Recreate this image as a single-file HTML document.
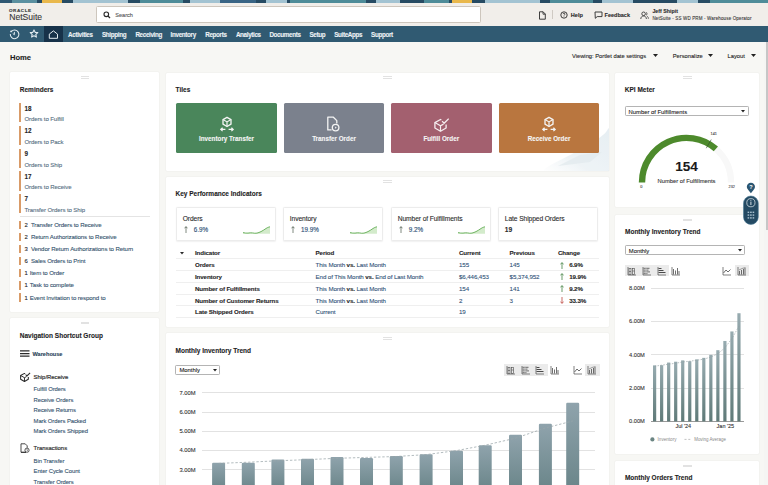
<!DOCTYPE html>
<html><head><meta charset="utf-8">
<style>
*{box-sizing:border-box;margin:0;padding:0}
html,body{width:768px;height:485px;overflow:hidden}
body{position:relative;background:#f7f7f4;font-family:"Liberation Sans",sans-serif;color:#1f1f1f;-webkit-text-stroke-width:0.1px}
.a{position:absolute;white-space:nowrap}
.strip{position:absolute;left:0;top:0;width:768px;height:3px;background:linear-gradient(90deg,#2f5873 0 12px,#5b90a0 12px 37px,#274b63 37px 42px,#e9b84c 42px 62px,#274b63 62px 73px,#a3c3d2 73px 128px,#274b63 128px 140px,#4f8c99 140px 183px,#274b63 183px 190px,#a3c3d2 190px 220px,#3a6585 220px 256px,#274b63 256px 266px,#a3c3d2 266px 287px,#274b63 287px 290px,#4f8c99 290px 366px,#274b63 366px 376px,#a3c3d2 376px 400px,#274b63 400px 424px,#4f8c99 424px 449px,#274b63 449px 452px,#e9b84c 452px 472px,#274b63 472px 485px,#a3c3d2 485px 540px,#274b63 540px 550px,#4f8c99 550px 593px,#274b63 593px 602px,#a3c3d2 602px 633px,#274b63 633px 677px,#a3c3d2 677px 698px,#274b63 698px 710px,#4f8c99 710px 768px)}
.hdr{position:absolute;left:0;top:3px;width:768px;height:22.5px;background:#f1eeea}
.nav{position:absolute;left:0;top:25.5px;width:768px;height:16px;background:#305a72}
.nav .t{position:absolute;top:1.2px;line-height:16px;color:#eef3f6;font-weight:bold;font-size:6.3px;letter-spacing:-0.35px}
.card{position:absolute;background:#fff;border-radius:1px;box-shadow:0 0 1.2px rgba(0,0,0,.13)}
.grip{position:absolute;width:8.5px;height:2.6px;border-top:0.6px solid #e2e2e2;border-bottom:0.6px solid #e2e2e2}
.ttl{position:absolute;font-weight:bold;font-size:6.5px;color:#1d1d1d;white-space:nowrap}
</style></head><body>
<div class="strip"></div>
<div class="hdr"></div>

<div class="a" style="left:9.4px;top:8.9px;font-size:3.6px;font-weight:bold;letter-spacing:0.45px;color:#3b3b3b;line-height:4px;transform:scaleX(1.27);transform-origin:0 0">ORACLE</div>
<div class="a" style="left:9.2px;top:11.9px;font-size:8.6px;color:#353535;line-height:10px">NetSuite</div>
<div class="a" style="left:95.5px;top:6.4px;width:385px;height:16.2px;background:#fff;border:0.7px solid #cdc6bd;border-radius:1.5px"></div>
<svg class="a" style="left:102.5px;top:11px" width="8" height="8" viewBox="0 0 8 8"><circle cx="3.3" cy="3.3" r="2.3" fill="none" stroke="#2a2a2a" stroke-width="1.1"/><line x1="5" y1="5" x2="7" y2="7" stroke="#2a2a2a" stroke-width="1.2"/></svg>
<div class="a" style="left:115.2px;top:10.5px;font-size:5.6px;color:#555;line-height:8px">Search</div>
<svg class="a" style="left:537.5px;top:11px" width="9" height="9" viewBox="0 0 9 9"><path d="M1.5 0.8h3.6l2.2 2.2v5.2h-5.8z" fill="none" stroke="#2a2a2a" stroke-width="0.9"/><path d="M5 0.8v2.4h2.3" fill="none" stroke="#2a2a2a" stroke-width="0.8"/></svg>
<div class="a" style="left:552px;top:10px;width:0.6px;height:9px;background:#cfcac3"></div>
<svg class="a" style="left:559.5px;top:11px" width="8" height="8" viewBox="0 0 8 8"><circle cx="4" cy="4" r="3.2" fill="none" stroke="#2a2a2a" stroke-width="0.9"/><path d="M3 3.1c0-1.2 2-1.2 2 0c0 .8-1 .7-1 1.5" fill="none" stroke="#2a2a2a" stroke-width="0.8"/><circle cx="4" cy="5.7" r=".45" fill="#2a2a2a"/></svg>
<div class="a" style="left:570.8px;top:11px;font-size:5.6px;font-weight:bold;color:#2a2a2a;line-height:8px">Help</div>
<svg class="a" style="left:593.5px;top:11px" width="9" height="8" viewBox="0 0 9 8"><path d="M1 1h7v4.6H3.2L1.3 7.3z" fill="none" stroke="#2a2a2a" stroke-width="0.9"/></svg>
<div class="a" style="left:604.6px;top:11px;font-size:5.5px;font-weight:bold;color:#2a2a2a;line-height:8px">Feedback</div>
<svg class="a" style="left:640px;top:11px" width="9" height="9" viewBox="0 0 9 9"><circle cx="3.6" cy="2.8" r="1.8" fill="none" stroke="#2a2a2a" stroke-width="0.8"/><path d="M0.8 8c0-2 1.3-3 2.8-3s2.8 1 2.8 3" fill="none" stroke="#2a2a2a" stroke-width="0.8"/><path d="M6 1.3a1.6 1.6 0 0 1 0 3M7.2 5.2c.8.5 1.2 1.4 1.2 2.6" fill="none" stroke="#2a2a2a" stroke-width="0.7"/></svg>
<div class="a" style="left:652.4px;top:8.3px;font-size:5.3px;font-weight:bold;color:#2a2a2a;line-height:7px">Jeff Shipit</div>
<div class="a" style="left:652.4px;top:15.6px;font-size:4.5px;color:#3a3a3a;line-height:6px;letter-spacing:0.15px">NetSuite - SS WD PRM - Warehouse Operator</div>

<div class="nav">
<svg class="a" style="left:9px;top:3.5px" width="11" height="11" viewBox="0 0 11 11"><path d="M2.3 2.6A4.3 4.3 0 1 1 1.3 5" fill="none" stroke="#e3ecf1" stroke-width="1.05"/><circle cx="2.1" cy="2.4" r=".95" fill="#e3ecf1"/><path d="M5.4 2.9v2.8L3.8 4.6" fill="none" stroke="#e3ecf1" stroke-width="0.95"/></svg>
<svg class="a" style="left:29px;top:3.8px" width="10" height="9" viewBox="0 0 10 9"><path d="M5 .9l1.15 2.45 2.65.3-1.95 1.8.55 2.65L5 6.75 2.6 8.1l.55-2.65L1.2 3.65l2.65-.3z" fill="none" stroke="#e3ecf1" stroke-width="1.1" stroke-linejoin="round"/></svg>
<div class="a" style="left:44.2px;top:0;width:18.8px;height:16px;background:#17324a"></div>
<svg class="a" style="left:48px;top:4.3px" width="11" height="9" viewBox="0 0 11 9"><path d="M1.3 8.3V4.1L5.4 .9l4.1 3.2v4.2z" fill="none" stroke="#e3ecf1" stroke-width="1" stroke-linejoin="round"/></svg>
<div class="t" style="left:68.1px">Activities</div>
<div class="t" style="left:102px">Shipping</div>
<div class="t" style="left:135.4px">Receiving</div>
<div class="t" style="left:170.6px">Inventory</div>
<div class="t" style="left:205.2px">Reports</div>
<div class="t" style="left:235.9px">Analytics</div>
<div class="t" style="left:269.4px">Documents</div>
<div class="t" style="left:309.5px">Setup</div>
<div class="t" style="left:334.2px">SuiteApps</div>
<div class="t" style="left:371.1px">Support</div>
</div>

<div class="a" style="left:10px;top:52.5px;font-size:7.6px;font-weight:bold;color:#1d1d1d;line-height:10px">Home</div>
<div class="a" style="left:572px;top:52.6px;font-size:5.75px;color:#222;line-height:7px">Viewing: Portlet date settings</div>
<svg class="a" style="left:653px;top:54px" width="5" height="3" viewBox="0 0 5 3"><path d="M0 0h5L2.5 3z" fill="#222"/></svg>
<div class="a" style="left:672.7px;top:52.6px;font-size:5.75px;color:#222;line-height:7px">Personalize</div>
<svg class="a" style="left:707.5px;top:54px" width="5" height="3" viewBox="0 0 5 3"><path d="M0 0h5L2.5 3z" fill="#222"/></svg>
<div class="a" style="left:727.6px;top:52.6px;font-size:5.75px;color:#222;line-height:7px">Layout</div>
<svg class="a" style="left:751px;top:54px" width="5" height="3" viewBox="0 0 5 3"><path d="M0 0h5L2.5 3z" fill="#222"/></svg>

<div class="card" style="left:10px;top:72.2px;width:149.3px;height:239.5px"></div>
<div class="grip" style="left:80.5px;top:76.3px"></div>
<div class="ttl" style="left:19.8px;top:85.5px;line-height:8px">Reminders</div>
<div class="a" style="left:19.2px;top:103.2px;width:1.5px;height:19.3px;background:#d99b68"></div>
<div class="a" style="left:24.4px;top:104.6px;font-size:6.3px;font-weight:bold;color:#262626;line-height:8px">18</div>
<div class="a" style="left:24.4px;top:115.1px;font-size:6.05px;letter-spacing:-0.1px;color:#566f83;line-height:8px">Orders to Fulfill</div>
<div class="a" style="left:19.2px;top:125.9px;width:1.5px;height:19.3px;background:#d99b68"></div>
<div class="a" style="left:24.4px;top:127.3px;font-size:6.3px;font-weight:bold;color:#262626;line-height:8px">12</div>
<div class="a" style="left:24.4px;top:137.8px;font-size:6.05px;letter-spacing:-0.1px;color:#566f83;line-height:8px">Orders to Pack</div>
<div class="a" style="left:19.2px;top:148.6px;width:1.5px;height:19.3px;background:#d99b68"></div>
<div class="a" style="left:24.4px;top:150.0px;font-size:6.3px;font-weight:bold;color:#262626;line-height:8px">9</div>
<div class="a" style="left:24.4px;top:160.5px;font-size:6.05px;letter-spacing:-0.1px;color:#566f83;line-height:8px">Orders to Ship</div>
<div class="a" style="left:19.2px;top:171.3px;width:1.5px;height:19.3px;background:#d99b68"></div>
<div class="a" style="left:24.4px;top:172.7px;font-size:6.3px;font-weight:bold;color:#262626;line-height:8px">17</div>
<div class="a" style="left:24.4px;top:183.2px;font-size:6.05px;letter-spacing:-0.1px;color:#566f83;line-height:8px">Orders to Receive</div>
<div class="a" style="left:19.2px;top:194.0px;width:1.5px;height:19.3px;background:#d99b68"></div>
<div class="a" style="left:24.4px;top:195.4px;font-size:6.3px;font-weight:bold;color:#262626;line-height:8px">7</div>
<div class="a" style="left:24.4px;top:205.9px;font-size:6.05px;letter-spacing:-0.1px;color:#566f83;line-height:8px">Transfer Orders to Ship</div>
<div class="a" style="left:19.6px;top:216.3px;width:130.5px;height:0.6px;background:#e4e4e4"></div>
<div class="a" style="left:19.2px;top:220.5px;width:1.5px;height:8.4px;background:#d99b68"></div>
<div class="a" style="left:24.4px;top:220.7px;font-size:5.9px;color:#2b2b2b;-webkit-text-stroke:0.12px #2b2b2b;line-height:8px">2</div>
<div class="a" style="left:30.9px;top:220.7px;font-size:6.1px;letter-spacing:-0.1px;color:#34536e;line-height:8px">Transfer Orders to Receive</div>
<div class="a" style="left:19.2px;top:232.6px;width:1.5px;height:8.4px;background:#d99b68"></div>
<div class="a" style="left:24.4px;top:232.8px;font-size:5.9px;color:#2b2b2b;-webkit-text-stroke:0.12px #2b2b2b;line-height:8px">2</div>
<div class="a" style="left:30.9px;top:232.8px;font-size:6.1px;letter-spacing:-0.1px;color:#34536e;line-height:8px">Return Authorizations to Receive</div>
<div class="a" style="left:19.2px;top:244.8px;width:1.5px;height:8.4px;background:#d99b68"></div>
<div class="a" style="left:24.4px;top:245.0px;font-size:5.9px;color:#2b2b2b;-webkit-text-stroke:0.12px #2b2b2b;line-height:8px">3</div>
<div class="a" style="left:30.9px;top:245.0px;font-size:6.1px;letter-spacing:-0.1px;color:#34536e;line-height:8px">Vendor Return Authorizations to Return</div>
<div class="a" style="left:19.2px;top:256.9px;width:1.5px;height:8.4px;background:#d99b68"></div>
<div class="a" style="left:24.4px;top:257.1px;font-size:5.9px;color:#2b2b2b;-webkit-text-stroke:0.12px #2b2b2b;line-height:8px">6</div>
<div class="a" style="left:30.9px;top:257.1px;font-size:6.1px;letter-spacing:-0.1px;color:#34536e;line-height:8px">Sales Orders to Print</div>
<div class="a" style="left:19.2px;top:269.0px;width:1.5px;height:8.4px;background:#d99b68"></div>
<div class="a" style="left:24.4px;top:269.2px;font-size:5.9px;color:#2b2b2b;-webkit-text-stroke:0.12px #2b2b2b;line-height:8px">1</div>
<div class="a" style="left:29.7px;top:269.2px;font-size:6.1px;letter-spacing:-0.1px;color:#34536e;line-height:8px">Item to Order</div>
<div class="a" style="left:19.2px;top:281.2px;width:1.5px;height:8.4px;background:#d99b68"></div>
<div class="a" style="left:24.4px;top:281.4px;font-size:5.9px;color:#2b2b2b;-webkit-text-stroke:0.12px #2b2b2b;line-height:8px">1</div>
<div class="a" style="left:29.7px;top:281.4px;font-size:6.1px;letter-spacing:-0.1px;color:#34536e;line-height:8px">Task to complete</div>
<div class="a" style="left:19.2px;top:293.3px;width:1.5px;height:8.4px;background:#d99b68"></div>
<div class="a" style="left:24.4px;top:293.5px;font-size:5.9px;color:#2b2b2b;-webkit-text-stroke:0.12px #2b2b2b;line-height:8px">1</div>
<div class="a" style="left:29.7px;top:293.5px;font-size:6.1px;letter-spacing:-0.1px;color:#34536e;line-height:8px">Event Invitation to respond to</div>
<div class="card" style="left:10px;top:318px;width:149.3px;height:180px"></div>
<div class="grip" style="left:80.5px;top:321.5px"></div>
<div class="ttl" style="left:19.8px;top:332px;line-height:8px">Navigation Shortcut Group</div>
<svg class="a" style="left:19.6px;top:350.2px" width="10" height="7" viewBox="0 0 10 7"><path d="M0 .8h9.5M0 3.5h9.5M0 6.2h9.5" stroke="#2b2b2b" stroke-width="1.25"/></svg>
<div class="a" style="left:32.5px;top:349.8px;font-size:5.6px;font-weight:bold;color:#263f57;line-height:8px">Warehouse</div>
<svg class="a" style="left:19.5px;top:371px" width="11" height="11" viewBox="0 0 16 16"><path d="M12.1 8.6V12L6.5 15.2 0.9 12V6.6L6.5 3.5 7.4 4" fill="none" stroke="#2b2b2b" stroke-width="1.5" stroke-linejoin="round"/><path d="M0.9 6.6l5.6 3.1 3-1.6M6.5 9.7v5.5" fill="none" stroke="#2b2b2b" stroke-width="1.4"/><path d="M8.1 5.1l2 2.1 4.6-4.6" fill="none" stroke="#2b2b2b" stroke-width="1.5"/></svg>
<div class="a" style="left:33.6px;top:372.8px;font-size:5.9px;color:#333;-webkit-text-stroke:0.2px #333;line-height:8px">Ship/Receive</div>
<div class="a" style="left:33.6px;top:385.0px;font-size:5.9px;letter-spacing:-0.09px;color:#34536e;line-height:8px">Fulfill Orders</div>
<div class="a" style="left:33.6px;top:395.6px;font-size:5.9px;letter-spacing:-0.09px;color:#34536e;line-height:8px">Receive Orders</div>
<div class="a" style="left:33.6px;top:406.1px;font-size:5.9px;letter-spacing:-0.09px;color:#34536e;line-height:8px">Receive Returns</div>
<div class="a" style="left:33.6px;top:416.7px;font-size:5.9px;letter-spacing:-0.09px;color:#34536e;line-height:8px">Mark Orders Packed</div>
<div class="a" style="left:33.6px;top:427.3px;font-size:5.9px;letter-spacing:-0.09px;color:#34536e;line-height:8px">Mark Orders Shipped</div>
<svg class="a" style="left:19.8px;top:442.8px" width="10" height="10" viewBox="0 0 10 10"><path d="M1 .8h4.2l2 2v2M6 9.3H1z" fill="none" stroke="#2b2b2b" stroke-width="0.85"/><path d="M1 .8v8.5" stroke="#2b2b2b" stroke-width="0.85"/><circle cx="7" cy="7.2" r="2.1" fill="none" stroke="#2b2b2b" stroke-width="0.8"/><path d="M7 6.1v1.2l.8.5" fill="none" stroke="#2b2b2b" stroke-width="0.6"/></svg>
<div class="a" style="left:33.6px;top:443.9px;font-size:5.9px;color:#333;-webkit-text-stroke:0.2px #333;line-height:8px">Transactions</div>
<div class="a" style="left:33.6px;top:456.9px;font-size:5.9px;letter-spacing:-0.09px;color:#34536e;line-height:8px">Bin Transfer</div>
<div class="a" style="left:33.6px;top:467.4px;font-size:5.9px;letter-spacing:-0.09px;color:#34536e;line-height:8px">Enter Cycle Count</div>
<div class="a" style="left:33.6px;top:477.9px;font-size:5.9px;letter-spacing:-0.09px;color:#34536e;line-height:8px">Transfer Orders</div>
<div class="card" style="left:165.7px;top:72.6px;width:443.5px;height:98px"></div>
<div class="grip" style="left:383px;top:76.3px"></div>
<div class="ttl" style="left:175.6px;top:86.4px;line-height:8px">Tiles</div>
<svg class="a" style="left:540px;top:128px;opacity:.75" width="69" height="43" viewBox="0 0 69 43"><defs><linearGradient id="pg" x1="0" y1="1" x2="1" y2="0"><stop offset="0" stop-color="#eef3f6" stop-opacity="0"/><stop offset=".35" stop-color="#e9f0f4"/><stop offset="1" stop-color="#dfe9ef"/></linearGradient></defs><path d="M2 43C10 36 30 28 50 16S66 2 69 0V43z" fill="url(#pg)"/><path d="M18 38L40 27 62 24 50 34z" fill="#dae3e9" opacity=".8"/></svg>
<div class="a" style="left:176.25px;top:103.4px;width:100.5px;height:50px;background:#4a865b;border-radius:1.5px"></div>
<svg class="a" style="left:219.50px;top:116px" width="15" height="16" viewBox="0 0 15 16"><path d="M7 1.3L11 3.6v4.6L7 10.5 3 8.2V3.6z" fill="none" stroke="#f4f4f4" stroke-width="1.35" stroke-linejoin="round"/><path d="M3 3.6l4 2.3 4-2.3M7 5.9v4.6" fill="none" stroke="#f4f4f4" stroke-width="1.2"/><path d="M0.8 13.4h4.6M2.6 11.7L0.8 13.4l1.8 1.7M13.2 13.4H8.6M11.4 11.7L13.2 13.4l-1.8 1.7" fill="none" stroke="#f4f4f4" stroke-width="1.2"/></svg>
<div class="a" style="left:176.25px;top:135px;width:100.5px;text-align:center;font-size:6.3px;font-weight:bold;color:#f6f6f6;line-height:8px">Inventory Transfer</div>
<div class="a" style="left:283.75px;top:103.4px;width:100.5px;height:50px;background:#7b818d;border-radius:1.5px"></div>
<svg class="a" style="left:327.00px;top:116px" width="15" height="16" viewBox="0 0 15 16"><path d="M4.6 13.9H0.8V1.2h5.6l3.4 3.4v3" fill="none" stroke="#f4f4f4" stroke-width="1.3" stroke-linejoin="round"/><circle cx="8.6" cy="11.6" r="3.3" fill="none" stroke="#f4f4f4" stroke-width="1.3"/><path d="M8.1 10.5v2.2l1.6-1.1z" fill="#f4f4f4"/></svg>
<div class="a" style="left:283.75px;top:135px;width:100.5px;text-align:center;font-size:6.3px;font-weight:bold;color:#f6f6f6;line-height:8px">Transfer Order</div>
<div class="a" style="left:391px;top:103.4px;width:100.5px;height:50px;background:#a3606f;border-radius:1.5px"></div>
<svg class="a" style="left:434.25px;top:116px" width="15" height="16" viewBox="0 0 15 16"><path d="M12.1 8.6V12L6.5 15.2 0.9 12V6.6L6.5 3.5 7.4 4" fill="none" stroke="#f6eef0" stroke-width="1.3" stroke-linejoin="round"/><path d="M0.9 6.6l5.6 3.1 3-1.6M6.5 9.7v5.5" fill="none" stroke="#f6eef0" stroke-width="1.2"/><path d="M8.1 5.1l2 2.1 4.6-4.6" fill="none" stroke="#f6eef0" stroke-width="1.3"/></svg>
<div class="a" style="left:391px;top:135px;width:100.5px;text-align:center;font-size:6.3px;font-weight:bold;color:#f6f6f6;line-height:8px">Fulfill Order</div>
<div class="a" style="left:498.75px;top:103.4px;width:100.5px;height:50px;background:#b9763f;border-radius:1.5px"></div>
<svg class="a" style="left:542.00px;top:116px" width="15" height="16" viewBox="0 0 15 16"><path d="M7 1.3L11 3.6v4.6L7 10.5 3 8.2V3.6z" fill="none" stroke="#f4f4f4" stroke-width="1.35" stroke-linejoin="round"/><path d="M3 3.6l4 2.3 4-2.3M7 5.9v4.6" fill="none" stroke="#f4f4f4" stroke-width="1.2"/><path d="M0.8 13.4h4.6M2.6 11.7L0.8 13.4l1.8 1.7M13.2 13.4H8.6M11.4 11.7L13.2 13.4l-1.8 1.7" fill="none" stroke="#f4f4f4" stroke-width="1.2"/></svg>
<div class="a" style="left:498.75px;top:135px;width:100.5px;text-align:center;font-size:6.3px;font-weight:bold;color:#f6f6f6;line-height:8px">Receive Order</div>
<div class="card" style="left:166px;top:176.6px;width:443px;height:150px"></div>
<div class="grip" style="left:383px;top:180.3px"></div>
<div class="ttl" style="left:175.5px;top:189.6px;line-height:8px">Key Performance Indicators</div>
<div class="a" style="left:175.9px;top:207px;width:100.4px;height:34.4px;border:0.6px solid #e6e6e6;border-radius:1.5px;background:#fff;box-shadow:0 0.5px 1.5px rgba(0,0,0,.06);border-color:#ececec"></div>
<div class="a" style="left:182.7px;top:215.2px;font-size:6.7px;letter-spacing:-0.1px;color:#2a2a2a;line-height:8px">Orders</div>
<svg class="a" style="left:184.1px;top:226.3px" width="4" height="7" viewBox="0 0 4 7"><path d="M2 7V.8M.5 2.3L2 .6l1.5 1.7" fill="none" stroke="#3b4a3a" stroke-width="0.65"/></svg>
<div class="a" style="left:193.8px;top:226.4px;font-size:6.3px;color:#34557a;-webkit-text-stroke:0.15px #34557a;line-height:8px">6.9%</div>
<svg class="a" style="left:243.1px;top:226px" width="28" height="9" viewBox="0 0 28 9"><path d="M0 6.6C2 7 3.5 7.3 5 7.1S8 6.6 9.5 6.9 12.5 7.5 14 7.1 16.5 6.3 18 5.6 21 3.8 23 2.5 25.5 1.2 27 0.8V7.8H0z" fill="#d3ebcb"/><path d="M0 6.6C2 7 3.5 7.3 5 7.1S8 6.6 9.5 6.9 12.5 7.5 14 7.1 16.5 6.3 18 5.6 21 3.8 23 2.5 25.5 1.2 27 0.8" fill="none" stroke="#62ab55" stroke-width="0.9"/></svg>
<div class="a" style="left:283px;top:207px;width:100.4px;height:34.4px;border:0.6px solid #e6e6e6;border-radius:1.5px;background:#fff;box-shadow:0 0.5px 1.5px rgba(0,0,0,.06);border-color:#ececec"></div>
<div class="a" style="left:289.8px;top:215.2px;font-size:6.7px;letter-spacing:-0.1px;color:#2a2a2a;line-height:8px">Inventory</div>
<svg class="a" style="left:291.2px;top:226.3px" width="4" height="7" viewBox="0 0 4 7"><path d="M2 7V.8M.5 2.3L2 .6l1.5 1.7" fill="none" stroke="#3b4a3a" stroke-width="0.65"/></svg>
<div class="a" style="left:300.9px;top:226.4px;font-size:6.3px;color:#34557a;-webkit-text-stroke:0.15px #34557a;line-height:8px">19.9%</div>
<svg class="a" style="left:350.2px;top:226px" width="28" height="9" viewBox="0 0 28 9"><path d="M0 6.6C2 7 3.5 7.3 5 7.1S8 6.6 9.5 6.9 12.5 7.5 14 7.1 16.5 6.3 18 5.6 21 3.8 23 2.5 25.5 1.2 27 0.8V7.8H0z" fill="#d3ebcb"/><path d="M0 6.6C2 7 3.5 7.3 5 7.1S8 6.6 9.5 6.9 12.5 7.5 14 7.1 16.5 6.3 18 5.6 21 3.8 23 2.5 25.5 1.2 27 0.8" fill="none" stroke="#62ab55" stroke-width="0.9"/></svg>
<div class="a" style="left:390.9px;top:207px;width:100.4px;height:34.4px;border:0.6px solid #e6e6e6;border-radius:1.5px;background:#fff;box-shadow:0 0.5px 1.5px rgba(0,0,0,.06);border-color:#ececec"></div>
<div class="a" style="left:397.7px;top:215.2px;font-size:6.7px;letter-spacing:-0.1px;color:#2a2a2a;line-height:8px">Number of Fulfillments</div>
<svg class="a" style="left:399.1px;top:226.3px" width="4" height="7" viewBox="0 0 4 7"><path d="M2 7V.8M.5 2.3L2 .6l1.5 1.7" fill="none" stroke="#3b4a3a" stroke-width="0.65"/></svg>
<div class="a" style="left:408.8px;top:226.4px;font-size:6.3px;color:#34557a;-webkit-text-stroke:0.15px #34557a;line-height:8px">9.2%</div>
<svg class="a" style="left:458.1px;top:226px" width="28" height="9" viewBox="0 0 28 9"><path d="M0 6.6C2 7 3.5 7.3 5 7.1S8 6.6 9.5 6.9 12.5 7.5 14 7.1 16.5 6.3 18 5.6 21 3.8 23 2.5 25.5 1.2 27 0.8V7.8H0z" fill="#d3ebcb"/><path d="M0 6.6C2 7 3.5 7.3 5 7.1S8 6.6 9.5 6.9 12.5 7.5 14 7.1 16.5 6.3 18 5.6 21 3.8 23 2.5 25.5 1.2 27 0.8" fill="none" stroke="#62ab55" stroke-width="0.9"/></svg>
<div class="a" style="left:498px;top:207px;width:100.4px;height:34.4px;border:0.6px solid #e6e6e6;border-radius:1.5px;background:#fff;box-shadow:0 0.5px 1.5px rgba(0,0,0,.06);border-color:#ececec"></div>
<div class="a" style="left:504.8px;top:215.2px;font-size:6.7px;letter-spacing:-0.1px;color:#2a2a2a;line-height:8px">Late Shipped Orders</div>
<div class="a" style="left:504.8px;top:226.2px;font-size:6.6px;font-weight:bold;color:#2a2a2a;line-height:8px">19</div>
<div class="a" style="left:176.2px;top:258.3px;width:423px;height:0.6px;background:#efefef"></div>
<div class="a" style="left:176.2px;top:270.0px;width:423px;height:0.6px;background:#efefef"></div>
<div class="a" style="left:176.2px;top:282.2px;width:423px;height:0.6px;background:#efefef"></div>
<div class="a" style="left:176.2px;top:293.9px;width:423px;height:0.6px;background:#efefef"></div>
<div class="a" style="left:176.2px;top:305.2px;width:423px;height:0.6px;background:#efefef"></div>
<div class="a" style="left:176.2px;top:316.9px;width:423px;height:0.6px;background:#efefef"></div>
<svg class="a" style="left:179.8px;top:251.6px" width="4" height="3" viewBox="0 0 4 3"><path d="M0 0h4L2 2.6z" fill="#2a2a2a"/></svg>
<div class="a" style="left:195px;top:249.1px;line-height:8px;font-size:6.2px;letter-spacing:-0.12px;font-weight:bold;color:#262626">Indicator</div>
<div class="a" style="left:315.6px;top:249.1px;line-height:8px;font-size:6.2px;letter-spacing:-0.12px;font-weight:bold;color:#262626">Period</div>
<div class="a" style="left:459px;top:249.1px;line-height:8px;font-size:6.2px;letter-spacing:-0.12px;font-weight:bold;color:#262626">Current</div>
<div class="a" style="left:509.6px;top:249.1px;line-height:8px;font-size:6.2px;letter-spacing:-0.12px;font-weight:bold;color:#262626">Previous</div>
<div class="a" style="left:558px;top:249.1px;line-height:8px;font-size:6.2px;letter-spacing:-0.12px;font-weight:bold;color:#262626">Change</div>
<div class="a" style="left:195px;top:261.3px;line-height:8px;font-size:6.2px;letter-spacing:-0.12px;font-weight:bold;color:#262626">Orders</div>
<div class="a" style="left:315.6px;top:261.3px;line-height:8px;font-size:6.2px;letter-spacing:-0.12px;"><span style="color:#34557a;font-weight:normal">This Month</span> <span style="color:#262626;font-weight:bold">vs.</span> <span style="color:#34557a">Last Month</span></div>
<div class="a" style="left:459px;top:261.3px;line-height:8px;font-size:6.2px;letter-spacing:-0.12px;color:#34557a">155</div>
<div class="a" style="left:509.6px;top:261.3px;line-height:8px;font-size:6.2px;letter-spacing:-0.12px;color:#34557a">145</div>
<svg class="a" style="left:560px;top:261.7px" width="4" height="7" viewBox="0 0 4 7"><path d="M2 7V.8M.4 2.4L2 .6l1.6 1.8" fill="none" stroke="#4e8a4e" stroke-width="0.85"/></svg>
<div class="a" style="left:569.2px;top:261.3px;line-height:8px;font-size:6.2px;letter-spacing:-0.12px;font-weight:bold;color:#262626">6.9%</div>
<div class="a" style="left:195px;top:273.0px;line-height:8px;font-size:6.2px;letter-spacing:-0.12px;font-weight:bold;color:#262626">Inventory</div>
<div class="a" style="left:315.6px;top:273.0px;line-height:8px;font-size:6.2px;letter-spacing:-0.12px;"><span style="color:#34557a">End of This Month</span> <span style="color:#262626;font-weight:bold">vs.</span> <span style="color:#34557a">End of Last Month</span></div>
<div class="a" style="left:459px;top:273.0px;line-height:8px;font-size:6.2px;letter-spacing:-0.12px;color:#34557a">$6,446,453</div>
<div class="a" style="left:509.6px;top:273.0px;line-height:8px;font-size:6.2px;letter-spacing:-0.12px;color:#34557a">$5,374,952</div>
<svg class="a" style="left:560px;top:273.4px" width="4" height="7" viewBox="0 0 4 7"><path d="M2 7V.8M.4 2.4L2 .6l1.6 1.8" fill="none" stroke="#4e8a4e" stroke-width="0.85"/></svg>
<div class="a" style="left:569.2px;top:273.0px;line-height:8px;font-size:6.2px;letter-spacing:-0.12px;font-weight:bold;color:#262626">19.9%</div>
<div class="a" style="left:195px;top:284.8px;line-height:8px;font-size:6.2px;letter-spacing:-0.12px;font-weight:bold;color:#262626">Number of Fulfillments</div>
<div class="a" style="left:315.6px;top:284.8px;line-height:8px;font-size:6.2px;letter-spacing:-0.12px;"><span style="color:#34557a;font-weight:normal">This Month</span> <span style="color:#262626;font-weight:bold">vs.</span> <span style="color:#34557a">Last Month</span></div>
<div class="a" style="left:459px;top:284.8px;line-height:8px;font-size:6.2px;letter-spacing:-0.12px;color:#34557a">154</div>
<div class="a" style="left:509.6px;top:284.8px;line-height:8px;font-size:6.2px;letter-spacing:-0.12px;color:#34557a">141</div>
<svg class="a" style="left:560px;top:285.1px" width="4" height="7" viewBox="0 0 4 7"><path d="M2 7V.8M.4 2.4L2 .6l1.6 1.8" fill="none" stroke="#4e8a4e" stroke-width="0.85"/></svg>
<div class="a" style="left:569.2px;top:284.8px;line-height:8px;font-size:6.2px;letter-spacing:-0.12px;font-weight:bold;color:#262626">9.2%</div>
<div class="a" style="left:195px;top:296.5px;line-height:8px;font-size:6.2px;letter-spacing:-0.12px;font-weight:bold;color:#262626">Number of Customer Returns</div>
<div class="a" style="left:315.6px;top:296.5px;line-height:8px;font-size:6.2px;letter-spacing:-0.12px;"><span style="color:#34557a;font-weight:normal">This Month</span> <span style="color:#262626;font-weight:bold">vs.</span> <span style="color:#34557a">Last Month</span></div>
<div class="a" style="left:459px;top:296.5px;line-height:8px;font-size:6.2px;letter-spacing:-0.12px;color:#34557a">2</div>
<div class="a" style="left:509.6px;top:296.5px;line-height:8px;font-size:6.2px;letter-spacing:-0.12px;color:#34557a">3</div>
<svg class="a" style="left:560px;top:297.1px" width="4" height="7" viewBox="0 0 4 7"><path d="M2 0v6.2M.4 4.6L2 6.4l1.6-1.8" fill="none" stroke="#c0504a" stroke-width="0.85"/></svg>
<div class="a" style="left:569.2px;top:296.5px;line-height:8px;font-size:6.2px;letter-spacing:-0.12px;font-weight:bold;color:#262626">33.3%</div>
<div class="a" style="left:195px;top:307.7px;line-height:8px;font-size:6.2px;letter-spacing:-0.12px;font-weight:bold;color:#262626">Late Shipped Orders</div>
<div class="a" style="left:315.6px;top:307.7px;line-height:8px;font-size:6.2px;letter-spacing:-0.12px;"><span style="color:#34557a">Current</span></div>
<div class="a" style="left:459px;top:307.7px;line-height:8px;font-size:6.2px;letter-spacing:-0.12px;color:#34557a">19</div>
<div class="card" style="left:166px;top:332.6px;width:443px;height:170px"></div>
<div class="grip" style="left:383px;top:337px"></div>
<div class="ttl" style="left:175.5px;top:347.3px;line-height:8px">Monthly Inventory Trend</div>
<div class="a" style="left:175.4px;top:365.2px;width:44.2px;height:9.9px;border:0.6px solid #b4b4b4;border-radius:1.2px;background:#fff"></div>
<div class="a" style="left:179.4px;top:366.2px;font-size:5.9px;color:#222;line-height:8px">Monthly</div>
<svg class="a" style="left:212.8px;top:368.8px" width="4" height="3" viewBox="0 0 4 3"><path d="M0 0h4L2 2.6z" fill="#222"/></svg>
<div class="a" style="left:504.1px;top:364.2px;width:14.5px;height:11.6px;background:#ebebeb"></div>
<svg class="a" style="left:505.4px;top:364.0px" width="12" height="12" viewBox="0 0 12 12"><path d="M2 2v8h8" fill="none" stroke="#4a4a4a" stroke-width=".7"/><rect x="3" y="3.5" width="2" height="6" fill="none" stroke="#4a4a4a" stroke-width=".6"/><rect x="6.5" y="3.5" width="2" height="6" fill="none" stroke="#4a4a4a" stroke-width=".6"/><path d="M3 6.5h2M6.5 6h2" stroke="#4a4a4a" stroke-width=".6"/></svg>
<div class="a" style="left:518.6px;top:364.2px;width:14.5px;height:11.6px;background:#ebebeb"></div>
<svg class="a" style="left:519.9px;top:364.0px" width="12" height="12" viewBox="0 0 12 12"><path d="M2 2v8h8" fill="none" stroke="#4a4a4a" stroke-width=".7"/><path d="M2.5 3.3h6M2.5 5.1h5M2.5 6.9h6.5M2.5 8.7h4" stroke="#4a4a4a" stroke-width=".8"/><path d="M5 2.8v6.4" stroke="#ebebeb" stroke-width=".5"/></svg>
<div class="a" style="left:533.1px;top:364.2px;width:14.5px;height:11.6px;background:#ebebeb"></div>
<svg class="a" style="left:534.4px;top:364.0px" width="12" height="12" viewBox="0 0 12 12"><path d="M2 2v8h8" fill="none" stroke="#4a4a4a" stroke-width=".7"/><path d="M2.5 3.5h3M2.5 5.5h5M2.5 7.5h7" stroke="#4a4a4a" stroke-width="1"/></svg>
<div class="a" style="left:547.6px;top:364.2px;width:14.5px;height:11.6px;background:#fff"></div>
<svg class="a" style="left:548.9px;top:364.0px" width="12" height="12" viewBox="0 0 12 12"><path d="M2 2v8h8" fill="none" stroke="#4a4a4a" stroke-width=".7"/><path d="M3.5 9.5V4M5.5 9.5V5.5M7.5 9.5V3M9 9.5V6" stroke="#4a4a4a" stroke-width=".8"/></svg>
<div class="a" style="left:570.5px;top:364.2px;width:14.5px;height:11.6px;background:#fff"></div>
<svg class="a" style="left:571.8px;top:364.0px" width="12" height="12" viewBox="0 0 12 12"><path d="M2 2v8h8" fill="none" stroke="#4a4a4a" stroke-width=".7"/><path d="M2.5 8L5 5l2 2 2.5-2.5" fill="none" stroke="#4a4a4a" stroke-width=".8"/></svg>
<div class="a" style="left:585.0px;top:364.2px;width:14.5px;height:11.6px;background:#ebebeb"></div>
<svg class="a" style="left:586.2px;top:364.0px" width="12" height="12" viewBox="0 0 12 12"><path d="M2 2v8h8" fill="none" stroke="#4a4a4a" stroke-width=".7"/><path d="M3.5 9.5V6M5.5 9.5V5M7.5 9.5V4M9 9.5V3" stroke="#4a4a4a" stroke-width=".8"/><path d="M3 5l3-1.5 3.5-1" fill="none" stroke="#4a4a4a" stroke-width=".5"/></svg>
<div class="a" style="left:201.5px;top:392.3px;width:393.5px;height:0.6px;background:#e2e2e2"></div>
<div class="a" style="left:165px;top:388.6px;width:30.5px;text-align:right;font-size:5.8px;color:#333;line-height:8px">7.00M</div>
<div class="a" style="left:201.5px;top:411.7px;width:393.5px;height:0.6px;background:#e2e2e2"></div>
<div class="a" style="left:165px;top:408.0px;width:30.5px;text-align:right;font-size:5.8px;color:#333;line-height:8px">6.00M</div>
<div class="a" style="left:201.5px;top:430.9px;width:393.5px;height:0.6px;background:#e2e2e2"></div>
<div class="a" style="left:165px;top:427.2px;width:30.5px;text-align:right;font-size:5.8px;color:#333;line-height:8px">5.00M</div>
<div class="a" style="left:201.5px;top:450.1px;width:393.5px;height:0.6px;background:#e2e2e2"></div>
<div class="a" style="left:165px;top:446.4px;width:30.5px;text-align:right;font-size:5.8px;color:#333;line-height:8px">4.00M</div>
<div class="a" style="left:201.5px;top:469.3px;width:393.5px;height:0.6px;background:#e2e2e2"></div>
<div class="a" style="left:165px;top:465.6px;width:30.5px;text-align:right;font-size:5.8px;color:#333;line-height:8px">3.00M</div>
<svg class="a" style="left:0;top:0" width="768" height="485" viewBox="0 0 768 485"><defs><linearGradient id="bg1" x1="0" y1="0" x2="0" y2="1"><stop offset="0" stop-color="#8fa3ac"/><stop offset="1" stop-color="#6a8589"/></linearGradient></defs>
<path d="M212.1 490V464.06q0-1.2 1.2-1.2h10.6q1.2 0 1.2 1.2V490z" fill="url(#bg1)"/>
<path d="M241.8 490V463.87q0-1.2 1.2-1.2h10.6q1.2 0 1.2 1.2V490z" fill="url(#bg1)"/>
<path d="M271.4 490V460.79q0-1.2 1.2-1.2h10.6q1.2 0 1.2 1.2V490z" fill="url(#bg1)"/>
<path d="M301 490V459.83q0-1.2 1.2-1.2h10.6q1.2 0 1.2 1.2V490z" fill="url(#bg1)"/>
<path d="M330.5 490V458.29q0-1.2 1.2-1.2h10.6q1.2 0 1.2 1.2V490z" fill="url(#bg1)"/>
<path d="M360 490V459.25q0-1.2 1.2-1.2h10.6q1.2 0 1.2 1.2V490z" fill="url(#bg1)"/>
<path d="M389.8 490V457.13q0-1.2 1.2-1.2h10.6q1.2 0 1.2 1.2V490z" fill="url(#bg1)"/>
<path d="M419.6 490V455.40q0-1.2 1.2-1.2h10.6q1.2 0 1.2 1.2V490z" fill="url(#bg1)"/>
<path d="M450 490V451.94q0-1.2 1.2-1.2h10.6q1.2 0 1.2 1.2V490z" fill="url(#bg1)"/>
<path d="M478.7 490V446.55q0-1.2 1.2-1.2h10.6q1.2 0 1.2 1.2V490z" fill="url(#bg1)"/>
<path d="M509 490V435.96q0-1.2 1.2-1.2h10.6q1.2 0 1.2 1.2V490z" fill="url(#bg1)"/>
<path d="M538.9 490V424.99q0-1.2 1.2-1.2h10.6q1.2 0 1.2 1.2V490z" fill="url(#bg1)"/>
<path d="M566.2 490V404.00q0-1.2 1.2-1.2h10.6q1.2 0 1.2 1.2V490z" fill="url(#bg1)"/>
<polyline points="218.6,463.4 248.3,462.2 277.9,460.8 307.5,459.6 337.0,458.3 366.5,457.4 396.3,456.5 426.1,454.6 456.5,450.6 485.2,445.2 515.5,438.2 545.4,428.0 572.7,421.0" fill="none" stroke="#9aa6aa" stroke-width="0.75" stroke-dasharray="2.4 1.8"/>
</svg>
<div class="card" style="left:615.3px;top:72.5px;width:143.3px;height:134.7px"></div>
<div class="grip" style="left:683px;top:76.3px"></div>
<div class="ttl" style="left:624.8px;top:85.6px;line-height:8px">KPI Meter</div>
<div class="a" style="left:624.8px;top:106.4px;width:123.9px;height:10px;border:0.6px solid #b4b4b4;border-radius:1.2px;background:#fff"></div>
<div class="a" style="left:628.6px;top:107.5px;font-size:5.85px;color:#222;line-height:8px">Number of Fulfillments</div>
<svg class="a" style="left:741.4px;top:110.3px" width="4" height="3" viewBox="0 0 4 3"><path d="M0 0h4L2 2.6z" fill="#222"/></svg>
<svg class="a" style="left:0;top:0" width="768" height="485" viewBox="0 0 768 485">
<path d="M715.87 148.97A44.5 44.5 0 0 1 731.00 182.40" fill="none" stroke="#f8f8f8" stroke-width="6.4"/>
<path d="M642.00 182.40A44.5 44.5 0 0 1 715.87 148.97" fill="none" stroke="#4d8a2c" stroke-width="6.4"/>
<path d="M706.25 148.19L711.25 139.53" stroke="#2f4a2a" stroke-width="0.6"/>
</svg>
<div class="a" style="left:650px;top:159.2px;width:73px;text-align:center;font-size:13.6px;font-weight:bold;color:#1a1a1a;line-height:16px">154</div>
<div class="a" style="left:650px;top:176.8px;width:73px;text-align:center;font-size:5.8px;color:#333;line-height:8px">Number of Fulfillments</div>
<div class="a" style="left:640.3px;top:184.6px;font-size:3.8px;color:#444;line-height:5px">0</div>
<div class="a" style="left:728.6px;top:184.6px;font-size:3.8px;color:#444;line-height:5px">232</div>
<div class="a" style="left:710.6px;top:131.7px;font-size:3.8px;color:#444;line-height:5px">141</div>
<div class="card" style="left:615.3px;top:215.1px;width:143.3px;height:239.1px"></div>
<div class="grip" style="left:683px;top:218.8px"></div>
<div class="ttl" style="left:625px;top:227.5px;line-height:8px">Monthly Inventory Trend</div>
<div class="a" style="left:625px;top:245.4px;width:120.2px;height:10.1px;border:0.6px solid #b4b4b4;border-radius:1.2px;background:#fff"></div>
<div class="a" style="left:628.8px;top:246.5px;font-size:5.85px;color:#222;line-height:8px">Monthly</div>
<svg class="a" style="left:738px;top:249.4px" width="4" height="3" viewBox="0 0 4 3"><path d="M0 0h4L2 2.6z" fill="#222"/></svg>
<div class="a" style="left:624.9px;top:265.3px;width:14.7px;height:10.9px;background:#ebebeb"></div>
<svg class="a" style="left:626.2px;top:264.8px" width="12" height="12" viewBox="0 0 12 12"><path d="M2 2v8h8" fill="none" stroke="#4a4a4a" stroke-width=".7"/><rect x="3" y="3.5" width="2" height="6" fill="none" stroke="#4a4a4a" stroke-width=".6"/><rect x="6.5" y="3.5" width="2" height="6" fill="none" stroke="#4a4a4a" stroke-width=".6"/><path d="M3 6.5h2M6.5 6h2" stroke="#4a4a4a" stroke-width=".6"/></svg>
<div class="a" style="left:639.6px;top:265.3px;width:14.7px;height:10.9px;background:#ebebeb"></div>
<svg class="a" style="left:641.0px;top:264.8px" width="12" height="12" viewBox="0 0 12 12"><path d="M2 2v8h8" fill="none" stroke="#4a4a4a" stroke-width=".7"/><path d="M2.5 3.3h6M2.5 5.1h5M2.5 6.9h6.5M2.5 8.7h4" stroke="#4a4a4a" stroke-width=".8"/><path d="M5 2.8v6.4" stroke="#ebebeb" stroke-width=".5"/></svg>
<div class="a" style="left:654.3px;top:265.3px;width:14.7px;height:10.9px;background:#ebebeb"></div>
<svg class="a" style="left:655.6px;top:264.8px" width="12" height="12" viewBox="0 0 12 12"><path d="M2 2v8h8" fill="none" stroke="#4a4a4a" stroke-width=".7"/><path d="M2.5 3.5h3M2.5 5.5h5M2.5 7.5h7" stroke="#4a4a4a" stroke-width="1"/></svg>
<div class="a" style="left:669.0px;top:265.3px;width:14.7px;height:10.9px;background:#fff"></div>
<svg class="a" style="left:670.4px;top:264.8px" width="12" height="12" viewBox="0 0 12 12"><path d="M2 2v8h8" fill="none" stroke="#4a4a4a" stroke-width=".7"/><path d="M3.5 9.5V4M5.5 9.5V5.5M7.5 9.5V3M9 9.5V6" stroke="#4a4a4a" stroke-width=".8"/></svg>
<div class="a" style="left:720.0px;top:265.3px;width:14.7px;height:10.9px;background:#fff"></div>
<svg class="a" style="left:721.4px;top:264.8px" width="12" height="12" viewBox="0 0 12 12"><path d="M2 2v8h8" fill="none" stroke="#4a4a4a" stroke-width=".7"/><path d="M2.5 8L5 5l2 2 2.5-2.5" fill="none" stroke="#4a4a4a" stroke-width=".8"/></svg>
<div class="a" style="left:734.7px;top:265.3px;width:14.7px;height:10.9px;background:#ebebeb"></div>
<svg class="a" style="left:736.1px;top:264.8px" width="12" height="12" viewBox="0 0 12 12"><path d="M2 2v8h8" fill="none" stroke="#4a4a4a" stroke-width=".7"/><path d="M3.5 9.5V6M5.5 9.5V5M7.5 9.5V4M9 9.5V3" stroke="#4a4a4a" stroke-width=".8"/><path d="M3 5l3-1.5 3.5-1" fill="none" stroke="#4a4a4a" stroke-width=".5"/></svg>
<div class="a" style="left:650.5px;top:287.6px;width:93px;height:0.6px;background:#e2e2e2"></div>
<div class="a" style="left:650.5px;top:320.8px;width:93px;height:0.6px;background:#e2e2e2"></div>
<div class="a" style="left:650.5px;top:354.3px;width:93px;height:0.6px;background:#e2e2e2"></div>
<div class="a" style="left:650.5px;top:387.7px;width:93px;height:0.6px;background:#e2e2e2"></div>
<div class="a" style="left:615px;top:283.9px;width:29.8px;text-align:right;font-size:5.7px;color:#333;line-height:8px">8.00M</div>
<div class="a" style="left:615px;top:317.1px;width:29.8px;text-align:right;font-size:5.7px;color:#333;line-height:8px">6.00M</div>
<div class="a" style="left:615px;top:350.6px;width:29.8px;text-align:right;font-size:5.7px;color:#333;line-height:8px">4.00M</div>
<div class="a" style="left:615px;top:384.0px;width:29.8px;text-align:right;font-size:5.7px;color:#333;line-height:8px">2.00M</div>
<div class="a" style="left:615px;top:417.4px;width:29.8px;text-align:right;font-size:5.7px;color:#333;line-height:8px">0.00M</div>
<div class="a" style="left:650.5px;top:421.1px;width:93px;height:0.7px;background:#9a9a9a"></div>
<svg class="a" style="left:0;top:0" width="768" height="485" viewBox="0 0 768 485"><defs><linearGradient id="bg2" x1="0" y1="0" x2="0" y2="1"><stop offset="0" stop-color="#97abb0"/><stop offset="1" stop-color="#5f7a78"/></linearGradient></defs>
<rect x="653.00" y="365.39" width="3.2" height="56.01" fill="url(#bg2)"/>
<rect x="660.03" y="365.22" width="3.2" height="56.18" fill="url(#bg2)"/>
<rect x="667.06" y="362.55" width="3.2" height="58.85" fill="url(#bg2)"/>
<rect x="674.09" y="361.71" width="3.2" height="59.69" fill="url(#bg2)"/>
<rect x="681.12" y="360.37" width="3.2" height="61.03" fill="url(#bg2)"/>
<rect x="688.15" y="361.21" width="3.2" height="60.19" fill="url(#bg2)"/>
<rect x="695.18" y="359.37" width="3.2" height="62.03" fill="url(#bg2)"/>
<rect x="702.21" y="357.86" width="3.2" height="63.54" fill="url(#bg2)"/>
<rect x="709.24" y="354.85" width="3.2" height="66.55" fill="url(#bg2)"/>
<rect x="716.27" y="350.17" width="3.2" height="71.23" fill="url(#bg2)"/>
<rect x="723.30" y="340.98" width="3.2" height="80.42" fill="url(#bg2)"/>
<rect x="730.33" y="331.45" width="3.2" height="89.95" fill="url(#bg2)"/>
<rect x="737.36" y="313.22" width="3.2" height="108.18" fill="url(#bg2)"/>
<polyline points="654.6,366.2 661.6,365.2 668.7,364.2 675.7,363.2 682.7,362.0 689.8,361.2 696.8,360.2 703.8,359.2 710.8,357.0 717.9,353.7 724.9,347.8 731.9,338.6 739.0,326.1" fill="none" stroke="#8d9a9e" stroke-width="0.6" stroke-dasharray="1.6 1.3"/>
<circle cx="652.4" cy="439.4" r="2.1" fill="#6b8583"/>
<path d="M684.5 439.4h2M688.3 439.4h2" stroke="#999" stroke-width="0.6"/>
</svg>
<div class="a" style="left:675.4px;top:422.5px;font-size:5.5px;color:#333;line-height:7px">Jul '24</div>
<div class="a" style="left:716.6px;top:422.5px;font-size:5.5px;color:#333;line-height:7px">Jan '25</div>
<div class="a" style="left:657.6px;top:437.2px;font-size:4.6px;color:#888;line-height:6px;-webkit-text-stroke-width:0">Inventory</div>
<div class="a" style="left:694.2px;top:437.2px;font-size:4.45px;color:#888;line-height:6px;-webkit-text-stroke-width:0">Moving Average</div>
<div class="card" style="left:615.3px;top:461px;width:143.3px;height:40px"></div>
<div class="grip" style="left:683px;top:464.8px"></div>
<div class="ttl" style="left:624.9px;top:473.9px;line-height:8px">Monthly Orders Trend</div>
<svg class="a" style="left:740px;top:180px" width="22" height="48" viewBox="0 0 22 48"><path d="M10.9 13.2L8.3 10A4.1 4.1 0 1 1 13.5 10z" fill="#2b5672"/><text x="10.9" y="9.3" text-anchor="middle" font-family="Liberation Sans" font-weight="bold" font-size="5.6" fill="#fff">?</text><rect x="3.5" y="16" width="14.8" height="28.4" rx="7.4" fill="#244a63" stroke="#4a7894" stroke-width="0.6"/><circle cx="10.9" cy="22.7" r="4.1" fill="none" stroke="#e9f0f4" stroke-width="0.7"/><path d="M10.9 21.6v3.4" stroke="#e9f0f4" stroke-width="0.9"/><circle cx="10.9" cy="20.3" r=".5" fill="#e9f0f4"/><g fill="#a9c0cf"><rect x="7.6" y="31.6" width="1.6" height="1.4"/><rect x="10.1" y="31.6" width="1.6" height="1.4"/><rect x="12.6" y="31.6" width="1.6" height="1.4"/><rect x="7.6" y="34.4" width="1.6" height="1.4"/><rect x="10.1" y="34.4" width="1.6" height="1.4"/><rect x="12.6" y="34.4" width="1.6" height="1.4"/><rect x="7.6" y="37.2" width="1.6" height="1.4"/><rect x="10.1" y="37.2" width="1.6" height="1.4"/><rect x="12.6" y="37.2" width="1.6" height="1.4"/></g></svg>
<div class="a" style="left:764px;top:41.5px;width:4px;height:443.5px;background:#f5f5f3"></div>
<div class="a" style="left:766.2px;top:42px;width:1.8px;height:188px;background:#c6c6c6"></div>
</body></html>
